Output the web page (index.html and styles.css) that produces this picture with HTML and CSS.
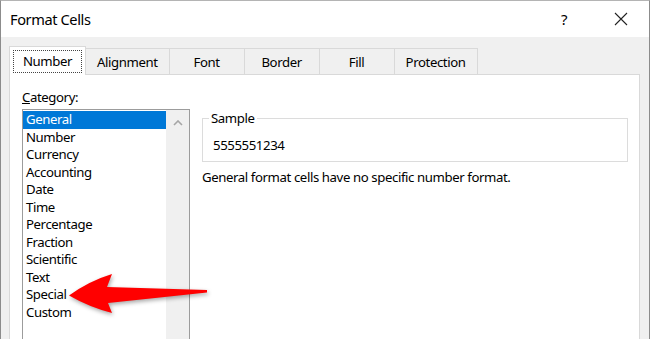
FILE: index.html
```html
<!DOCTYPE html>
<html lang="en">
<head>
    <meta charset="UTF-8">
    <title>Format Cells</title>
    <link rel="stylesheet" href="styles.css">
</head>
<body>
    <div class="window">
        <div class="titlebar">
            <span class="title">Format Cells</span>
            <span class="help">?</span>
            <span class="close">
                <svg width="14" height="14" viewBox="0 0 14 14">
                    <path d="M1 1 L13 13 M13 1 L1 13" stroke="#222" stroke-width="1.1" fill="none"/>
                </svg>
            </span>
        </div>

        <div class="dialog">
            <div class="tabs">
                <div class="tab active"><span class="focus">Number</span></div>
                <div class="tab">Alignment</div>
                <div class="tab">Font</div>
                <div class="tab">Border</div>
                <div class="tab">Fill</div>
                <div class="tab">Protection</div>
            </div>

            <div class="panel">
                <div class="category">
                    <div class="label"><u>C</u>ategory:</div>
                    <div class="listbox">
                        <ul class="items">
                            <li class="selected">General</li>
                            <li>Number</li>
                            <li>Currency</li>
                            <li>Accounting</li>
                            <li>Date</li>
                            <li>Time</li>
                            <li>Percentage</li>
                            <li>Fraction</li>
                            <li>Scientific</li>
                            <li>Text</li>
                            <li>Special</li>
                            <li>Custom</li>
                        </ul>
                        <div class="scrollbar">
                            <svg width="10" height="6" viewBox="0 0 10 6">
                                <path d="M1 5 L5 1 L9 5" stroke="#a6a6a6" stroke-width="1.6" fill="none"/>
                            </svg>
                        </div>
                    </div>
                </div>

                <div class="details">
                    <fieldset class="sample">
                        <legend>Sample</legend>
                        <div class="sample-value">5555551234</div>
                    </fieldset>
                    <p class="description">General format cells have no specific number format.</p>
                </div>
            </div>
        </div>

        <!-- flecha roja sobre la lista -->
        <svg class="arrow" width="650" height="339" viewBox="0 0 650 339">
            <path d="M69 295.5 Q 89 281 112 274 L 107 287 L 207 290 L 207 292.5 L 108 303 L 112 313 Q 89 307 69 295.5 Z" fill="#ff0000"/>
        </svg>
    </div>
</body>
</html>
```

FILE: styles.css
```css
* {
    margin: 0;
    padding: 0;
    box-sizing: border-box;
}

body {
    font-family: "Noto Sans", "Open Sans", sans-serif;
    font-size: 13.2px;
    letter-spacing: -0.4px;
    color: #000;
    background: #f0f0f0;
}

.window {
    position: relative;
    width: 650px;
    height: 339px;
    overflow: hidden;
    display: flex;
    flex-direction: column;
    border: 1px solid #8c8c8c;
    border-bottom: none;
    border-top-color: #b4b4b4;
    background: #f0f0f0;
}

.titlebar {
    height: 36px;
    display: flex;
    align-items: center;
    background: white;
    padding: 0 21px 0 9px;
}

.title {
    flex: 1;
    font-size: 14.6px;
}

.help {
    font-size: 15px;
    margin-right: 47px;
}

.close {
    display: flex;
}

.dialog {
    flex: 1;
    display: flex;
    flex-direction: column;
    padding: 11px 9px 0 8px;
}

.tabs {
    display: flex;
    align-items: flex-end;
    height: 26px;
    position: relative;
    z-index: 1;
}

.tab {
    height: 26px;
    min-width: 76px;
    padding: 2px 11px 0;
    line-height: 22px;
    text-align: center;
    border: 1px solid #d9d9d9;
    border-bottom: none;
    margin-left: -1px;
    background: #f0f0f0;
}

.tab.active {
    height: 29px;
    width: 77px;
    margin-left: 0;
    margin-bottom: -1px;
    padding: 3px 3px 0;
    background: white;
}

.focus {
    display: block;
    height: 23px;
    line-height: 21px;
    border: 1px dotted #444;
}

.panel {
    flex: 1;
    display: flex;
    background: white;
    border: 1px solid #d9d9d9;
    border-bottom: none;
    padding: 13px 11px 0 12px;
}

.category {
    width: 168px;
    display: flex;
    flex-direction: column;
}

.label {
    line-height: 19px;
    margin-bottom: 2px;
}

.listbox {
    flex: 1;
    display: flex;
    border: 1px solid #9c9c9c;
    border-bottom: none;
}

.items {
    flex: 1;
    list-style: none;
    padding-top: 1px;
}

.items li {
    line-height: 17.5px;
    height: 17.5px;
    padding-left: 3px;
}

.items li.selected {
    background: #0078d7;
    color: white;
}

.scrollbar {
    width: 23px;
    background: #f0f0f0;
    display: flex;
    justify-content: center;
    padding-top: 10px;
}

.details {
    flex: 1;
    margin-left: 12px;
    padding-top: 22px;
}

.sample {
    border: 1px solid #dcdcdc;
    padding: 0 6px 6px;
}

.sample legend {
    padding: 0 2px;
    line-height: 16px;
}

.sample-value {
    padding: 10px 0 0 4px;
    line-height: 19px;
}

.description {
    margin-top: 6px;
    line-height: 19px;
}

.arrow {
    position: absolute;
    left: -1px;
    top: -1px;
    pointer-events: none;
    filter: drop-shadow(1px 2px 2px rgba(0,0,0,0.35));
}
```
